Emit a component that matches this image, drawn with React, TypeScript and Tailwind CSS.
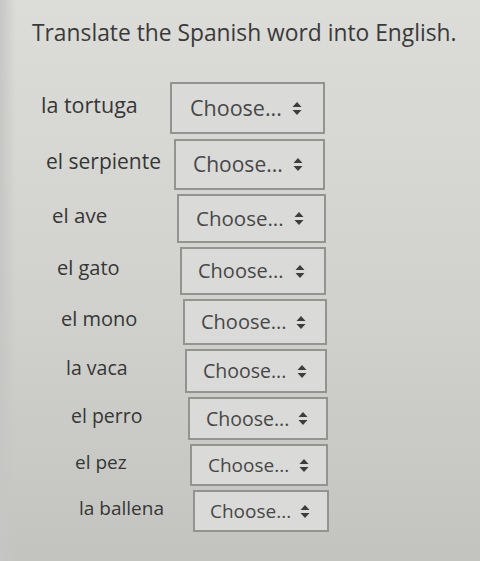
import React from "react";

type Row = {
  word: string;
  row: string;
  label: string;
  box: string;
  text: string;
};

const rows: Row[] = [
  { word: "la tortuga", row: "pl-[41px] mt-[34px]", label: "w-[129px] text-[21.5px]", box: "w-[155px] h-[52px] pl-[18px] pr-[21px]", text: "text-[21.5px]" },
  { word: "el serpiente", row: "pl-[46px] mt-[5px]", label: "w-[128px] text-[21px]", box: "w-[151px] h-[51px] pl-[17px] pr-[20px]", text: "text-[21px]" },
  { word: "el ave", row: "pl-[52px] mt-[4px]", label: "w-[125px] text-[20.5px]", box: "w-[149px] h-[49px] pl-[17px] pr-[20px]", text: "text-[20.5px]" },
  { word: "el gato", row: "pl-[57px] mt-[4px]", label: "w-[123px] text-[20px]", box: "w-[146px] h-[48px] pl-[16px] pr-[19px]", text: "text-[20px]" },
  { word: "el mono", row: "pl-[61px] mt-[4px]", label: "w-[122px] text-[20px]", box: "w-[144px] h-[46px] pl-[16px] pr-[19px]", text: "text-[20px]" },
  { word: "la vaca", row: "pl-[66px] mt-[4px]", label: "w-[119px] text-[19.5px]", box: "w-[142px] h-[44px] pl-[16px] pr-[18px]", text: "text-[19.5px]" },
  { word: "el perro", row: "pl-[71px] mt-[4px]", label: "w-[117px] text-[19.5px]", box: "w-[140px] h-[43px] pl-[16px] pr-[18px]", text: "text-[19.5px]" },
  { word: "el pez", row: "pl-[75px] mt-[4px]", label: "w-[115px] text-[19px]", box: "w-[138px] h-[42px] pl-[16px] pr-[17px]", text: "text-[19px]" },
  { word: "la ballena", row: "pl-[79px] mt-[4px]", label: "w-[114px] text-[19px]", box: "w-[136px] h-[42px] pl-[15px] pr-[17px]", text: "text-[19px]" },
];

function Arrows() {
  return (
    <svg width="10" height="15" viewBox="0 0 10 15" className="shrink-0">
      <path d="M5 1 L9.5 6 L0.5 6 Z" fill="#3d3d3d" />
      <path d="M5 14 L9.5 9 L0.5 9 Z" fill="#3d3d3d" />
    </svg>
  );
}

export default function App() {
  return (
    <div
      className="w-[480px] h-[561px] overflow-hidden bg-gradient-to-b from-[#dcdcd9] via-[#d2d2cf] to-[#c3c4c0] text-[#353535]"
      style={{ fontFamily: '"Open Sans", "Noto Sans", sans-serif' }}
    >
      <div className="flex h-full">
        <div className="w-[16px] h-full bg-gradient-to-r from-[#c6c6c4] to-transparent shrink-0" />
        <div className="flex flex-col flex-1 -ml-[16px]">
          <h1 className="pl-[32px] pt-[18px] text-[22.8px] leading-[30px] font-medium text-[#3a3a3a] whitespace-nowrap">
            Translate the Spanish word into English.
          </h1>
          {rows.map((r) => (
            <div key={r.word} className={`flex items-center ${r.row}`}>
              <div className={`${r.label} pb-[6px] whitespace-nowrap font-medium text-[#363636] leading-none`}>{r.word}</div>
              <div
                className={`${r.box} flex items-center justify-between border-2 border-[#939391] bg-[#dadad8]`}
              >
                <span className={`${r.text} font-medium text-[#474747] leading-none whitespace-nowrap`}>Choose...</span>
                <Arrows />
              </div>
            </div>
          ))}
        </div>
      </div>
    </div>
  );
}
